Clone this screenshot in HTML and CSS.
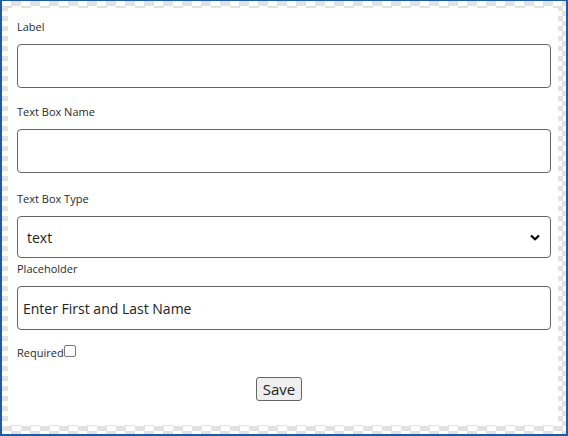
FILE: index.html
```html
<!DOCTYPE html>
<html>
<head>
<meta charset="utf-8">
<link rel="stylesheet" href="styles.css">
</head>
<body>
<div class="frame">
  <form class="panel">
    <label class="field-label">Label</label>
    <input class="text-input" type="text">
    <label class="field-label">Text Box Name</label>
    <input class="text-input" type="text">
    <label class="field-label before-select">Text Box Type</label>
    <div class="select-wrap">
      <select class="select-input"><option>text</option></select>
      <svg class="chevron" width="10" height="7" viewBox="0 0 10 7"><path d="M1 1.5 L5 5.2 L9 1.5" fill="none" stroke="#000" stroke-width="2.2"/></svg>
    </div>
    <label class="field-label after-select">Placeholder</label>
    <input class="text-input last-input" type="text" value="Enter First and Last Name">
    <div class="required-row">
      <span class="req-text">Required</span><span class="checkbox"></span>
    </div>
    <div class="actions">
      <button type="button" class="save-btn">Save</button>
    </div>
  </form>
</div>
</body>
</html>
```
FILE: styles.css
```css
html, body {
  margin: 0;
  padding: 0;
  background: #fff;
}
.frame {
  box-sizing: border-box;
  width: 568px;
  height: 436px;
  border-left: 2px solid #1b5ca4;
  border-right: 2px solid #1b5ca4;
  border-bottom: 2px solid #1b5ca4;
  border-top: 1px solid #1b5ca4;
  background-color: #fff;
  background-image: repeating-conic-gradient(#e2e2e2 0 25%, #fff 0 50%);
  background-size: 19px 10px;
  padding: 7px 8px 9px 6px;
}
.panel {
  box-sizing: border-box;
  height: 100%;
  background: #fff;
  padding: 12px 7px 0 9px;
  display: flex;
  flex-direction: column;
  font-family: "Open Sans", "DejaVu Sans", sans-serif;
  color: #222;
}
.field-label {
  font-size: 11px;
  line-height: 14px;
  margin-bottom: 10px;
  color: #2a2a2a;
}
.text-input {
  box-sizing: border-box;
  height: 44px;
  width: 100%;
  margin: 0 0 17px 0;
  border: 1px solid #666;
  border-radius: 4px;
  padding: 0 5px;
  font-family: inherit;
  font-size: 14px;
  color: #222;
  background: #fff;
  outline: none;
}
.last-input {
  margin-bottom: 15px;
}
.before-select {
  margin-top: 2px;
}
.select-wrap {
  position: relative;
  height: 42px;
}
.select-input {
  appearance: none;
  -webkit-appearance: none;
  box-sizing: border-box;
  width: 100%;
  height: 42px;
  border: 1px solid #666;
  border-radius: 4px;
  padding: 0 9px;
  font-family: inherit;
  font-size: 14px;
  color: #222;
  background: #fff;
  margin: 0;
}
.chevron {
  position: absolute;
  right: 11px;
  top: 18px;
}
.after-select {
  margin-top: 4px;
}
.required-row {
  font-size: 11px;
  line-height: 14px;
  display: flex;
  align-items: flex-end;
  color: #2a2a2a;
}
.checkbox {
  box-sizing: border-box;
  width: 12px;
  height: 12px;
  border: 1px solid #777;
  border-radius: 2px;
  margin-bottom: 3px;
}
.actions {
  display: flex;
  justify-content: center;
  padding-right: 10px;
  margin-top: 17px;
}
.save-btn {
  box-sizing: border-box;
  height: 24px;
  padding: 0 6px;
  border: 1px solid #666;
  border-radius: 3px;
  background: #efefef;
  font-family: inherit;
  font-size: 15px;
  color: #222;
}
```
